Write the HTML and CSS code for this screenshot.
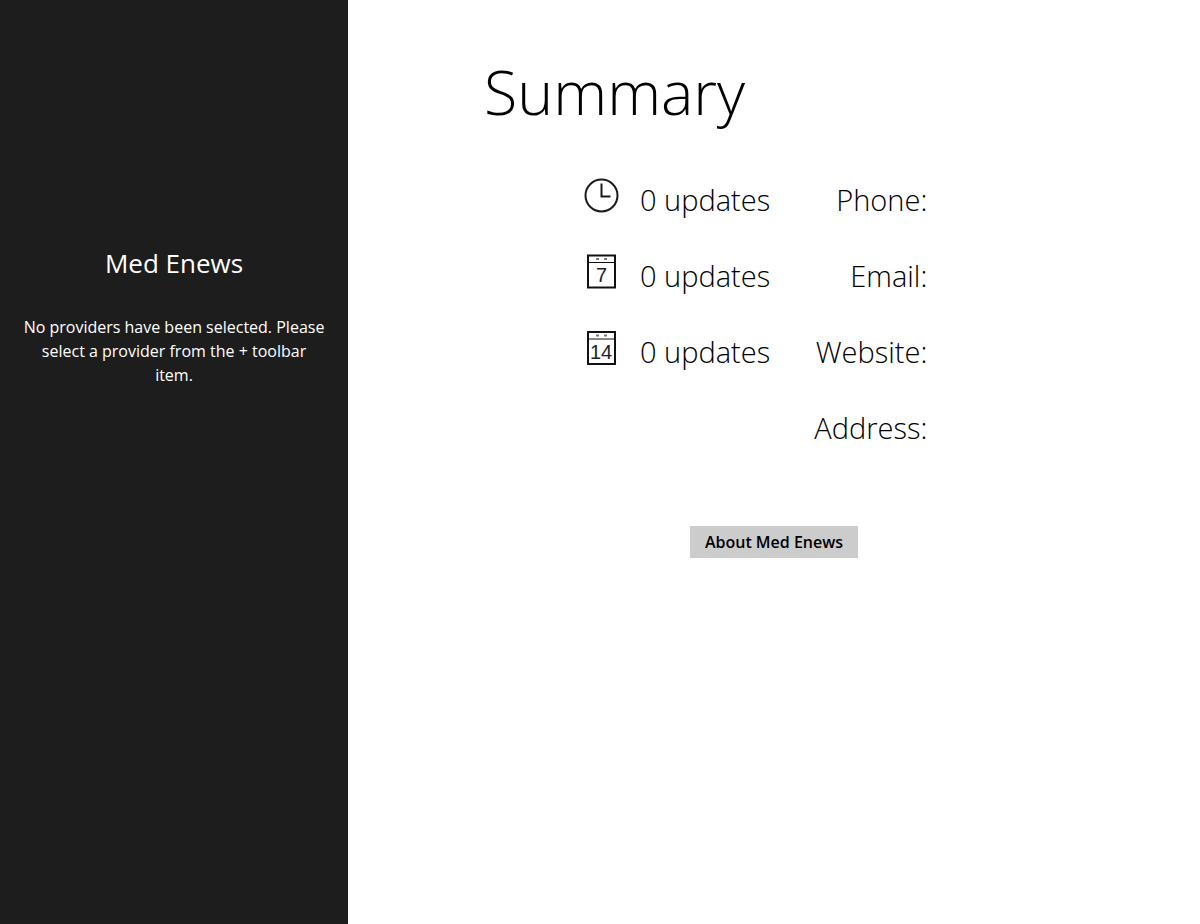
FILE: index.html
```html
<!DOCTYPE html>
<html lang="en">
<head>
<meta charset="utf-8">
<title>Med Enews</title>
<link rel="stylesheet" href="styles.css">
</head>
<body class="app">
<aside class="sidebar">
  <h2 class="sidebar-title">Med Enews</h2>
  <p class="sidebar-text">No providers have been selected. Please select a provider from the + toolbar item.</p>
</aside>
<main class="main">
  <div class="summary">
    <h1 class="title">Summary</h1>
    <div class="details">
      <ul class="list">
        <li class="row">
          <svg class="icon" viewBox="0 0 36 36" fill="none" stroke="#1a1a1a"><circle cx="18.500" cy="17.500" r="16" stroke-width="2"/><path d="M18.500 5.500V18.500H27.500" stroke-width="2"/></svg>
          <span>0 updates</span>
        </li>
        <li class="row">
          <svg class="icon" viewBox="0 0 36 36" fill="none" stroke="#111"><rect x="5" y="1.500" width="27" height="32" stroke-width="2"/><path d="M5 8.500h27" stroke-width="1"/><path d="M13 5h3M21 5h3" stroke="#777" stroke-width="2"/><text class="icon-text" x="18.500" y="28">7</text></svg>
          <span>0 updates</span>
        </li>
        <li class="row">
          <svg class="icon" viewBox="0 0 36 36" fill="none" stroke="#111"><rect x="5" y="2" width="27" height="32" stroke-width="2"/><path d="M5 9h27" stroke-width="1"/><path d="M13 5.500h3M21 5.500h3" stroke="#777" stroke-width="2"/><text class="icon-text" x="18" y="29">14</text></svg>
          <span>0 updates</span>
        </li>
      </ul>
      <ul class="list contacts">
        <li class="row">Phone:</li>
        <li class="row">Email:</li>
        <li class="row">Website:</li>
        <li class="row">Address:</li>
      </ul>
    </div>
  </div>
  <button class="about" type="button">About Med Enews</button>
</main>
</body>
</html>
```
FILE: styles.css
```css
.app {
  display: grid;
  grid-template-columns: 29% 1fr;
  min-height: 100vh;
  margin: 0;
  background: #fff;
  color: #000;
  font-family: "Segoe UI", "Open Sans", "Noto Sans", sans-serif;
}

.sidebar {
  padding: 243px 22px 24px;
  background: #1d1d1d;
  color: #fff;
  text-align: center;
}

.sidebar-title {
  margin: 0 0 32px;
  font-size: 26px;
  font-weight: 400;
  line-height: 40px;
}

.sidebar-text {
  margin: 0;
  font-size: 16px;
  line-height: 24px;
}

.main {
  display: flex;
  flex-direction: column;
  align-items: center;
  padding: 48px 24px;
}

.summary {
  width: 100%;
  max-width: 580px;
}

.title {
  margin: 0 0 32px;
  font-size: 61px;
  font-weight: 300;
  line-height: 88px;
}

.details {
  display: flex;
  gap: 44px;
  padding-left: 99px;
}

.list {
  display: grid;
  grid-auto-rows: 40px;
  gap: 36px;
  margin: 0;
  padding: 0;
  list-style: none;
  font-size: 29px;
  font-weight: 300;
}

.row {
  display: flex;
  align-items: flex-start;
  gap: 21px;
  line-height: 64px;
}

.contacts .row {
  justify-content: flex-end;
}

.icon {
  width: 36px;
  height: 36px;
  margin-top: 10px;
}

.icon-text {
  fill: #222;
  stroke: none;
  font-family: "Liberation Sans", Arial, sans-serif;
  font-size: 20px;
  font-weight: 400;
  text-anchor: middle;
}

.about {
  margin-top: 90px;
  padding: 0 15px;
  border: 0;
  background: #ccc;
  color: #000;
  font-family: inherit;
  font-size: 16px;
  font-weight: 600;
  line-height: 32px;
}
```
